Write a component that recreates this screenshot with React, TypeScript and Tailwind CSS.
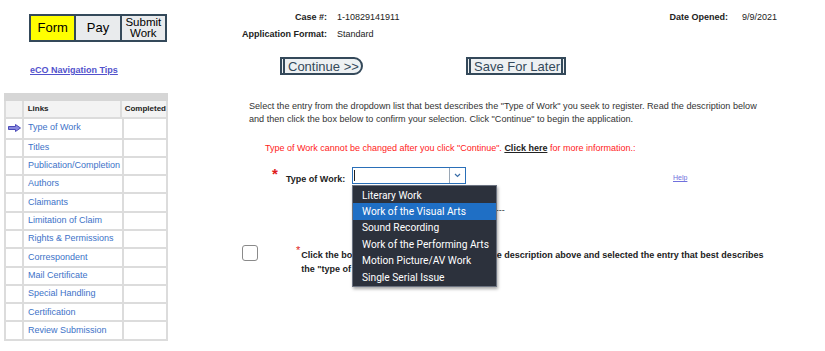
import React from 'react';

const links = [
  'Type of Work',
  'Titles',
  'Publication/Completion',
  'Authors',
  'Claimants',
  'Limitation of Claim',
  'Rights & Permissions',
  'Correspondent',
  'Mail Certificate',
  'Special Handling',
  'Certification',
  'Review Submission',
];

const workTypes = [
  'Literary Work',
  'Work of the Visual Arts',
  'Sound Recording',
  'Work of the Performing Arts',
  'Motion Picture/AV Work',
  'Single Serial Issue',
];

function NavArrow() {
  return (
    <svg width="13" height="8" viewBox="0 0 13 8">
      <path d="M0.5 2.5 H7.5 V0.5 L12.5 4 L7.5 7.5 V5.5 H0.5 Z" fill="#8a8ae0" stroke="#4b4bb8" strokeWidth="1" />
    </svg>
  );
}

function Tabs() {
  return (
    <div className="ml-[25px] mt-[14px] flex h-[28px] w-[138px] gap-[2px] border-2 border-[#34495a] bg-[#34495a]">
      <div className="flex flex-1 items-center justify-center bg-[#ffff00] text-[13px] text-black">Form</div>
      <div className="flex flex-1 items-center justify-center bg-[#e9ebed] text-[13px] text-black">Pay</div>
      <div className="flex flex-1 flex-col items-center justify-center bg-[#e9ebed] text-[11.5px] leading-[11px] text-black">
        <span>Submit</span>
        <span>Work</span>
      </div>
    </div>
  );
}

function NavTable() {
  return (
    <div className="mt-[15px] w-[164px]">
      <div className="h-[8px] bg-[#d6d6d6]" />
      <div className="border-l-2 border-r-2 border-[#dcdcdc]">
        <div className="flex h-[18px] border-b-2 border-[#dcdcdc] bg-[#f3f3f3] text-[8px] font-bold text-[#222]">
          <div className="w-[18px] border-r-2 border-[#dcdcdc]" />
          <div className="flex w-[100px] items-center border-r-2 border-[#dcdcdc] pl-[4px]">Links</div>
          <div className="flex flex-1 items-center pl-[3px]">Completed</div>
        </div>
        {links.map((l, i) => (
          <div
            key={l}
            className={`flex border-b-2 border-[#dcdcdc] text-[9px] text-[#3d72c8] ${i === 0 ? 'h-[21px]' : 'h-[18.3px]'}`}
          >
            <div className="flex w-[18px] items-center justify-center border-r-2 border-[#dcdcdc]">
              {i === 0 && <NavArrow />}
            </div>
            <div className="flex w-[100px] items-center border-r-2 border-[#dcdcdc] pl-[4px]">{l}</div>
            <div className="flex-1" />
          </div>
        ))}
      </div>
    </div>
  );
}

function BarButton({ label, rounded }: { label: string; rounded?: boolean }) {
  return (
    <button
      className={`flex h-[18px] items-stretch border-2 border-[#34495a] bg-[#eef1f3] pl-[1px] text-[13px] text-[#34495a] ${
        rounded ? 'w-[83px] rounded-r-[9px]' : 'w-[100px] pr-[1px]'
      }`}
    >
      <span className="w-[2px] bg-[#34495a]" />
      <span className="flex flex-1 items-center justify-start pl-[3px] leading-none">{label}</span>
      {!rounded && <span className="w-[2px] bg-[#34495a]" />}
    </button>
  );
}

function WorkTypeSelect() {
  return (
    <div className="relative">
      <div className="flex h-[17px] w-[114px] border border-[#2a6fb8] bg-white">
        <div className="flex flex-1 items-center pl-[1px]">
          <span className="h-[11px] w-px bg-[#222]" />
        </div>
        <div className="flex w-[16px] items-center justify-center border-l border-[#9aa7b5]">
          <svg width="7" height="5" viewBox="0 0 7 5">
            <path d="M1 1 L3.5 3.5 L6 1" fill="none" stroke="#3b6ea8" strokeWidth="1.2" />
          </svg>
        </div>
      </div>
      <ul className="absolute left-0 top-[18px] z-10 w-[145px] border border-[#6b7280] bg-[#2c313c] py-px shadow-[1px_2px_3px_rgba(0,0,0,0.35)] font-['Roboto',sans-serif] text-[10.2px] text-white">
        {workTypes.map((w) => (
          <li
            key={w}
            className={`flex h-[16.4px] items-center pl-[9px] ${w === 'Work of the Visual Arts' ? 'bg-[#1f6fc5]' : ''}`}
          >
            {w}
          </li>
        ))}
      </ul>
    </div>
  );
}

export default function App() {
  return (
    <div className="flex h-[351px] w-[825px] overflow-hidden bg-white font-['Liberation_Sans',Arial,sans-serif] text-[#222]">
      <aside className="w-[172px] shrink-0 pl-[4px]">
        <Tabs />
        <a href="#" className="ml-[26px] mt-[22px] block text-[9px] font-bold text-[#5252cc] underline">
          eCO Navigation Tips
        </a>
        <NavTable />
      </aside>

      <main className="flex-1">
        <div className="flex pt-[11px] text-[9px] leading-[12px]">
          <div className="grid grid-cols-[155px_auto] gap-x-[10px] gap-y-[5px]">
            <span className="text-right font-bold">Case #:</span>
            <span>1-10829141911</span>
            <span className="text-right font-bold">Application Format:</span>
            <span>Standard</span>
          </div>
          <div className="ml-auto mr-[48px] flex gap-[14px]">
            <span className="font-bold">Date Opened:</span>
            <span>9/9/2021</span>
          </div>
        </div>

        <div className="ml-[108px] mt-[17px] flex gap-[103px]">
          <BarButton label="Continue >>" rounded />
          <BarButton label="Save For Later" />
        </div>

        <p className="ml-[77px] mt-[25px] text-[9.1px] leading-[13px] text-[#333]">
          Select the entry from the dropdown list that best describes the "Type of Work" you seek to register. Read the description below
          <br />
          and then click the box below to confirm your selection. Click "Continue" to begin the application.
        </p>

        <p className="ml-[93px] mt-[16px] text-[9px] leading-[13px] text-[#ff1a1a]">
          Type of Work cannot be changed after you click "Continue".{' '}
          <a href="#" className="font-bold text-[#222] underline">
            Click here
          </a>{' '}
          for more information.:
        </p>

        <div className="ml-[100px] mt-[12px] flex items-start">
          <span className="mt-[-1px] w-[14px] text-[15px] font-bold leading-[15px] text-[#e01b1b]">*</span>
          <span className="mt-[6px] w-[66px] text-[9px] font-bold leading-[12px]">Type of Work:</span>
          <WorkTypeSelect />
          <a href="#" className="ml-[207px] mt-[6px] text-[7px] text-[#7070dd] underline">
            Help
          </a>
        </div>

        <div className="ml-[180px] mt-[20px] text-[9px] leading-[10px] text-[#333]">
          ---------------------------------------------------
        </div>

        <div className="ml-[70px] mt-[30px] flex items-start">
          <span className="h-[16px] w-[16px] rounded-[3px] border border-[#8a8a8a] bg-white" />
          <span className="ml-[38px] text-[11px] leading-[10px] text-[#e01b1b]">*</span>
          <p className="ml-[1px] mt-[3px] w-[472px] text-[9px] font-bold leading-[14px]">
            Click the box to confirm that you have read the description above and selected the entry that best describes the "type of work" you seek to register.
          </p>
        </div>
      </main>
    </div>
  );
}
